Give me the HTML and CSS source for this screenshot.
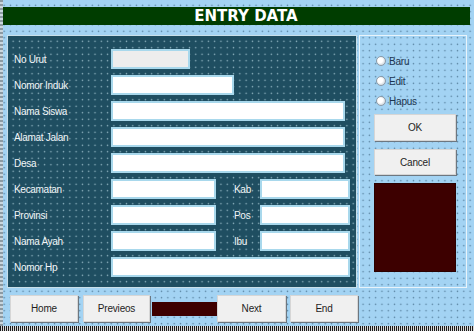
FILE: index.html
```html
<!DOCTYPE html>
<html>
<head>
<meta charset="utf-8">
<link rel="stylesheet" href="styles.css">
</head>
<body>
<div class="window">
  <div class="main">
    <div class="edge"></div>
    <div class="content">
      <div class="titlebar">ENTRY DATA</div>
      <div class="body">
        <div class="form">
          <div class="row"><span class="label">No Urut</span><span class="input gray w79"></span></div>
          <div class="row"><span class="label">Nomor Induk</span><span class="input w123"></span></div>
          <div class="row"><span class="label">Nama Siswa</span><span class="input w234"></span></div>
          <div class="row"><span class="label">Alamat Jalan</span><span class="input w234"></span></div>
          <div class="row"><span class="label">Desa</span><span class="input w234"></span></div>
          <div class="row"><span class="label">Kecamatan</span><span class="input w105"></span><span class="label2">Kab</span><span class="input w90"></span></div>
          <div class="row"><span class="label">Provinsi</span><span class="input w105"></span><span class="label2">Pos</span><span class="input w90"></span></div>
          <div class="row"><span class="label">Nama Ayah</span><span class="input w105"></span><span class="label2">Ibu</span><span class="input w90"></span></div>
          <div class="row"><span class="label">Nomor Hp</span><span class="input w239"></span></div>
        </div>
        <div class="side">
          <div class="radios">
            <div class="radio"><span class="dot"></span>Baru</div>
            <div class="radio"><span class="dot"></span>Edit</div>
            <div class="radio"><span class="dot"></span>Hapus</div>
          </div>
          <div class="btn side-ok">OK</div>
          <div class="btn side-cancel">Cancel</div>
          <div class="maroon-box"></div>
        </div>
      </div>
      <div class="buttons">
        <div class="btn nav home">Home</div>
        <div class="btn nav prev">Previeos</div>
        <div class="maroon-bar"></div>
        <div class="btn nav next">Next</div>
        <div class="btn nav end">End</div>
      </div>
    </div>
  </div>
  <div class="ruler"></div>
</div>
</body>
</html>
```

FILE: styles.css
```css
* { box-sizing: border-box; }
html, body { margin: 0; padding: 0; }
body {
  width: 474px;
  height: 331px;
  overflow: hidden;
  font-family: "Liberation Sans", Arial, sans-serif;
}
.window {
  width: 474px;
  height: 331px;
  display: flex;
  flex-direction: column;
  background-color: #a3d3f3;
  background-image: radial-gradient(circle, #4f7895 0.6px, transparent 1px);
  background-size: 6.3px 6.5px;
  background-position: 1px 2px;
}
.main {
  display: flex;
  height: 326px;
}
.edge {
  width: 3px;
  background: repeating-linear-gradient(to bottom, #8c9aa3 0 2px, #c9d6de 2px 4px);
}
.content {
  flex: 1;
  padding-top: 7px;
}
.titlebar {
  height: 18px;
  margin-right: 4px;
  background: #003d00;
  color: #ffffff;
  font-family: "DejaVu Sans", sans-serif;
  font-weight: bold;
  font-size: 15px;
  line-height: 18px;
  text-align: center;
  padding-left: 19px;
}
.body {
  display: flex;
  gap: 2px;
  margin-top: 10px;
  padding-left: 4px;
  height: 253px;
}
.form {
  width: 350px;
  height: 253px;
  border: 1px solid #c9dfe9;
  background-color: #1f4e61;
  background-image: radial-gradient(circle, #9dc0cc 0.6px, transparent 1px);
  background-size: 6.3px 6.5px;
  background-position: 2px 2px;
  padding: 13px 0 0 6px;
  display: flex;
  flex-direction: column;
  gap: 6px;
}
.row {
  display: flex;
  align-items: center;
  height: 20px;
}
.label {
  width: 97px;
  color: #f2f6f8;
  font-size: 10px;
  letter-spacing: -0.3px;
}
.label2 {
  width: 26px;
  margin-left: 18px;
  color: #f2f6f8;
  font-size: 10px;
  letter-spacing: -0.3px;
}
.input {
  height: 20px;
  background: #ffffff;
  border: 2px solid #a8d8ec;
}
.input.gray { background: #ededed; }
.w79 { width: 79px; }
.w123 { width: 123px; }
.w234 { width: 234px; }
.w105 { width: 105px; }
.w90 { width: 90px; }
.w239 { width: 239px; }
.side {
  width: 108px;
  height: 253px;
  border: 1px solid #e8f3fa;
  padding: 15px 0 0 14px;
  display: flex;
  flex-direction: column;
}
.radios {
  display: flex;
  flex-direction: column;
}
.radio {
  height: 20px;
  display: flex;
  align-items: center;
  padding-left: 2px;
  font-size: 10px;
  color: #1d3550;
  letter-spacing: -0.2px;
}
.dot {
  width: 10px;
  height: 10px;
  border-radius: 50%;
  margin-right: 3px;
  background: radial-gradient(circle at 40% 40%, #ffffff 0 35%, #d6dde2 70%, #9aa8b2 100%);
  border: 1px solid #8c9aa6;
}
.btn {
  display: flex;
  align-items: center;
  justify-content: center;
  background: #f0f0f0;
  border: 1px solid #d6d6d6;
  box-shadow: 1px 1px 0 #6d7780;
  color: #1e1e1e;
  font-size: 10px;
  letter-spacing: -0.2px;
}
.side-ok {
  width: 82px;
  height: 27px;
  margin-top: 3px;
}
.side-cancel {
  width: 82px;
  height: 26px;
  margin-top: 8px;
}
.maroon-box {
  width: 82px;
  height: 89px;
  margin-top: 8px;
  background: #3d0000;
  border: 1px solid #2a0000;
}
.buttons {
  display: flex;
  align-items: center;
  margin-top: 7px;
  padding-left: 7px;
  height: 27px;
}
.nav { height: 27px; }
.home { width: 68px; }
.prev { width: 67px; margin-left: 5px; }
.maroon-bar {
  width: 65px;
  height: 14px;
  margin-left: 2px;
  background: #3d0000;
}
.next { width: 69px; }
.end { width: 68px; margin-left: 4px; }
.ruler {
  height: 5px;
  background: repeating-linear-gradient(to right, #1a1a1a 0 1px, #d8d8d8 1px 2px);
}
```
